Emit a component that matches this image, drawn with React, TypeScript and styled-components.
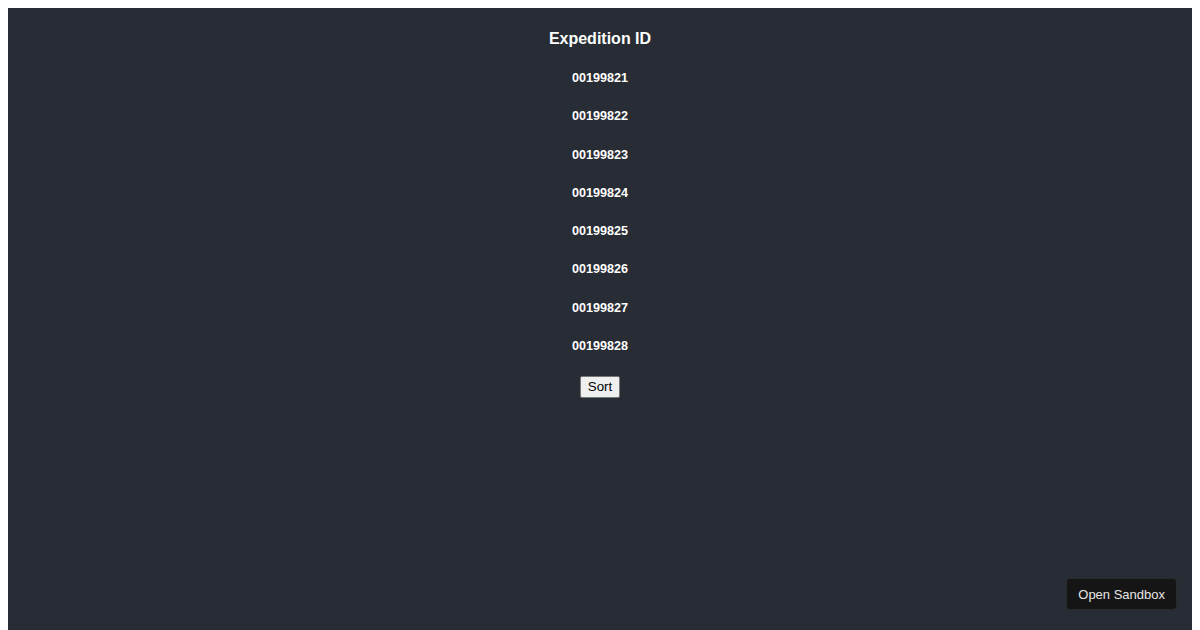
import React, { useState } from 'react';
import styled, { createGlobalStyle } from 'styled-components';

const GlobalStyle = createGlobalStyle`
  body {
    margin: 8px;
    font-family: "Liberation Sans", Arial, sans-serif;
  }
`;

const initialIds = [
  '00199821',
  '00199822',
  '00199823',
  '00199824',
  '00199825',
  '00199826',
  '00199827',
  '00199828',
];

function App() {
  const [ids, setIds] = useState(initialIds);
  const [asc, setAsc] = useState(true);

  const handleSort = () => {
    const sorted = [...ids].sort((a, b) => (asc ? b.localeCompare(a) : a.localeCompare(b)));
    setIds(sorted);
    setAsc(!asc);
  };

  return (
    <>
      <GlobalStyle />
      <Page>
        <Title>Expedition ID</Title>
        <IdList>
          {ids.map((id) => (
            <IdRow key={id}>{id}</IdRow>
          ))}
        </IdList>
        <SortButton onClick={handleSort}>Sort</SortButton>
      </Page>
      <SandboxButton>Open Sandbox</SandboxButton>
    </>
  );
}

export default App;

const Page = styled.div`
  min-height: 100vh;
  background-color: #282c34;
  color: #ffffff;
  display: flex;
  flex-direction: column;
  align-items: center;
`;

const Title = styled.h3`
  margin: 21px 0 0;
  font-size: 16px;
  line-height: 20px;
  font-weight: bold;
`;

const IdList = styled.div`
  margin-top: 10px;
  display: flex;
  flex-direction: column;
  align-items: center;
`;

const IdRow = styled.div`
  height: 38.3px;
  line-height: 38.3px;
  font-size: 12.6px;
  font-weight: bold;
`;

const SortButton = styled.button`
  margin-top: 11px;
  font-family: "Liberation Sans", Arial, sans-serif;
  font-size: 13.33px;
  color: #000;
  background: #efefef;
  border: 1px solid #767676;
  border-radius: 2px;
  padding: 2px 7px 3px;
  cursor: pointer;
`;

const SandboxButton = styled.button`
  position: fixed;
  right: 23px;
  bottom: 20px;
  height: 32px;
  padding: 0 11px;
  background: #151515;
  color: #e6e6e6;
  border: 1px solid #2a2a2a;
  border-radius: 4px;
  font-family: "Liberation Sans", Arial, sans-serif;
  font-size: 13px;
  cursor: pointer;
`;
